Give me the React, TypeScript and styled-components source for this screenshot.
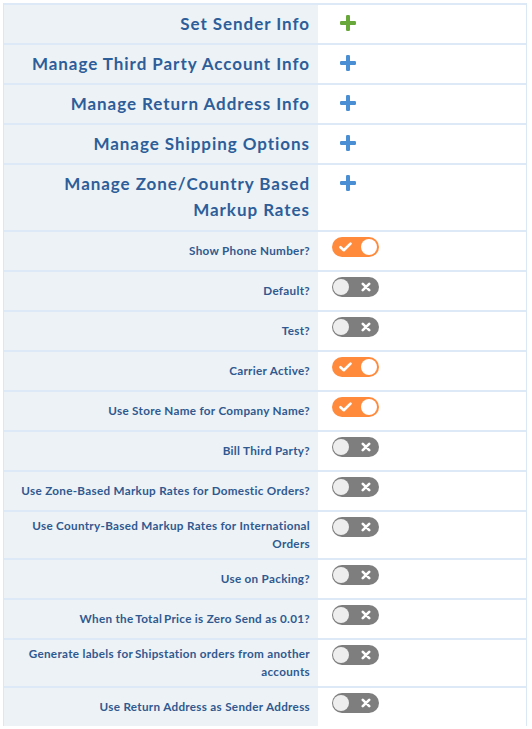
import React from "react";
import styled, { createGlobalStyle } from "styled-components";

const Global = createGlobalStyle`
  html, body { margin: 0; padding: 0; background: #ffffff; }
  body { font-family: Lato, "Open Sans", sans-serif; }
`;

const Table = styled.div`
  margin: 3px 0 0 3px;
  width: 524px;
  box-sizing: border-box;
  border-left: 1px solid #dae7f4;
  border-right: 1px solid #dae7f4;
`;

const Row = styled.div`
  display: grid;
  grid-template-columns: 314px 1fr;
  border-top: 2px solid #dde9f6;
`;

const HeadLabel = styled.div<{ $two?: boolean }>`
  background: #edf2f6;
  text-align: right;
  padding: 6px 8px ${(p) => (p.$two ? 7 : 6)}px 16px;
  font-size: 17px;
  font-weight: 700;
  letter-spacing: 0.95px;
  line-height: 26px;
  color: #2d5e99;
`;

const Label = styled.div`
  background: #edf2f6;
  display: flex;
  align-items: center;
  justify-content: flex-end;
  text-align: right;
  min-height: 38px;
  box-sizing: border-box;
  padding: 4px 8px 6px 12px;
  font-size: 11.7px;
  font-weight: 700;
  letter-spacing: 0.3px;
  line-height: 18px;
  color: #30598f;
`;

const Cell = styled.div<{ $top: number; $left: number }>`
  background: #ffffff;
  padding: ${(p) => p.$top}px 0 0 ${(p) => p.$left}px;
`;

const Plus = ({ color }: { color: string }) => (
  <svg width="16" height="16" viewBox="0 0 16 16" style={{ display: "block" }}>
    <rect x="6" y="0" width="4" height="16" rx="1.2" fill={color} />
    <rect x="0" y="6" width="16" height="4" rx="1.2" fill={color} />
  </svg>
);

const Track = styled.div<{ $on: boolean }>`
  position: relative;
  width: 47px;
  height: 20px;
  border-radius: 10px;
  background: ${(p) => (p.$on ? "#ff8a3c" : "#7e7e7e")};
`;

const Knob = styled.div<{ $on: boolean }>`
  position: absolute;
  top: 2px;
  ${(p) => (p.$on ? "right: 2px;" : "left: 1px;")}
  width: 16px;
  height: 16px;
  border-radius: 50%;
  background: ${(p) => (p.$on ? "#ffffff" : "#eeeeee")};
`;

const Mark = styled.svg<{ $on: boolean }>`
  position: absolute;
  top: 5px;
  ${(p) => (p.$on ? "left: 7px;" : "left: 29px;")}
`;

const Toggle = ({ on }: { on: boolean }) => (
  <Track $on={on}>
    {on ? (
      <Mark $on width="13" height="10" viewBox="0 0 13 10">
        <path d="M1.5 5.2 L4.8 8.2 L11.5 1.6" stroke="#fff" strokeWidth="2.6" fill="none" strokeLinecap="round" strokeLinejoin="round" />
      </Mark>
    ) : (
      <Mark $on={false} width="10" height="10" viewBox="0 0 10 10">
        <path d="M1.8 1.8 L8.2 8.2 M8.2 1.8 L1.8 8.2" stroke="#fff" strokeWidth="2.6" strokeLinecap="round" />
      </Mark>
    )}
    <Knob $on={on} />
  </Track>
);

const heads: { text: React.ReactNode; color: string; two?: boolean }[] = [
  { text: "Set Sender Info", color: "#68a83a" },
  { text: "Manage Third Party Account Info", color: "#4a8fd3" },
  { text: "Manage Return Address Info", color: "#4a8fd3" },
  { text: "Manage Shipping Options", color: "#4a8fd3" },
  {
    text: (
      <>
        Manage Zone/Country Based
        <br />
        Markup Rates
      </>
    ),
    color: "#4a8fd3",
    two: true,
  },
];

const toggles: { text: string; on: boolean }[] = [
  { text: "Show Phone Number?", on: true },
  { text: "Default?", on: false },
  { text: "Test?", on: false },
  { text: "Carrier Active?", on: true },
  { text: "Use Store Name for Company Name?", on: true },
  { text: "Bill Third Party?", on: false },
  { text: "Use Zone-Based Markup Rates for Domestic Orders?", on: false },
  { text: "Use Country-Based Markup Rates for International Orders", on: false },
  { text: "Use on Packing?", on: false },
  { text: "When the\u2009Total\u2009Price is Zero Send as 0.01?", on: false },
  { text: "Generate labels for\u2009Shipstation orders from another accounts", on: false },
  { text: "Use Return Address as Sender Address", on: false },
];

export default function App() {
  return (
    <>
      <Global />
      <Table>
        {heads.map((h, i) => (
          <Row key={`h${i}`}>
            <HeadLabel $two={h.two}>{h.text}</HeadLabel>
            <Cell $top={10} $left={22}>
              <Plus color={h.color} />
            </Cell>
          </Row>
        ))}
        {toggles.map((t, i) => (
          <Row key={`t${i}`}>
            <Label>{t.text}</Label>
            <Cell $top={5} $left={14}>
              <Toggle on={t.on} />
            </Cell>
          </Row>
        ))}
      </Table>
    </>
  );
}
